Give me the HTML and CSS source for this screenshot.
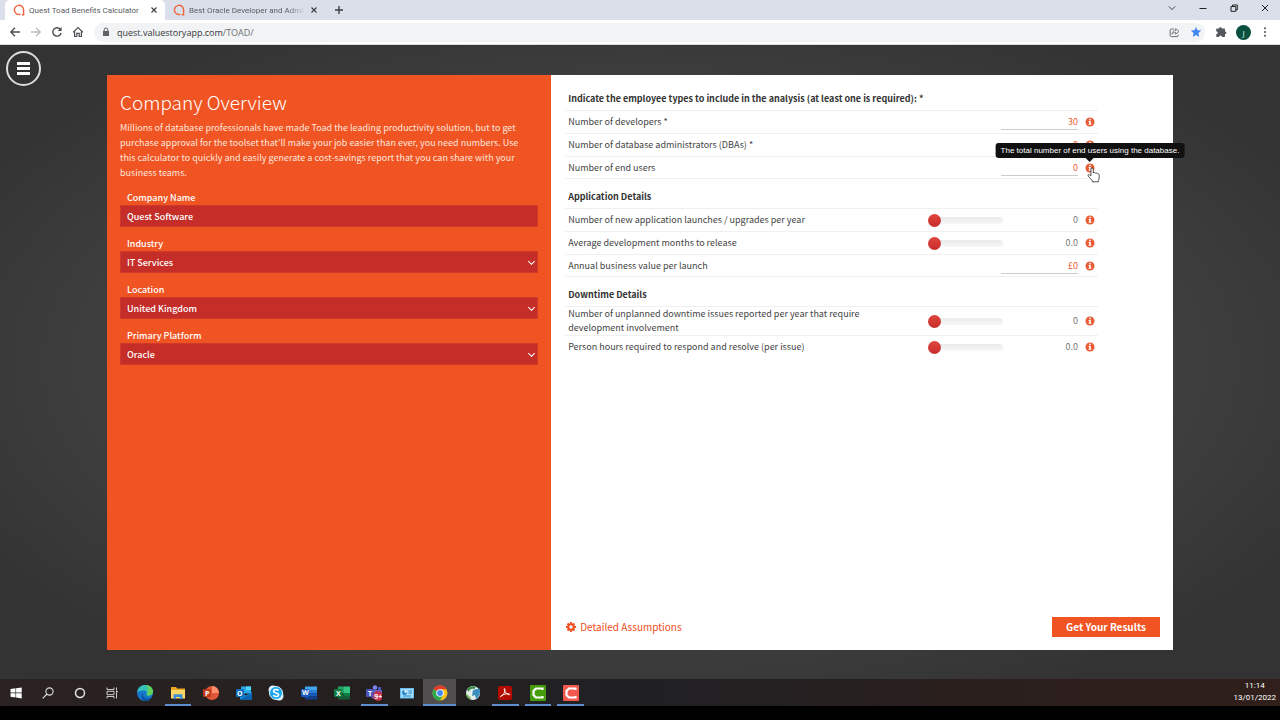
FILE: index.html
```
<!DOCTYPE html>
<html lang="en">
<head>
    <meta charset="UTF-8">
    <meta name="viewport" content="width=device-width, initial-scale=1.0">
    <title>Quest Toad Benefits Calculator</title>
    <link rel="stylesheet" href="styles.css">
</head>
<body>

    <!-- Shared icons -->
    <svg class="sprite" aria-hidden="true">
        <symbol id="quest" viewBox="0 0 12 12">
            <path d="M7.400 10.300A4.600 4.600 0 1 1 10.600 6v4.800H8.800" fill="none" stroke="#f0643f" stroke-width="1.400"/>
        </symbol>
        <symbol id="close" viewBox="0 0 8 8">
            <path d="M1.5 1.5l5 5M6.5 1.5l-5 5" stroke="#3c4043" stroke-width="1.2"/>
        </symbol>
        <symbol id="info" viewBox="0 0 10 10">
            <circle cx="5" cy="5" r="4.5" fill="#ea5c36"/>
            <path d="M4.2 1.8h1.6v1.4H4.2zM3.6 4h2.2v2.8h.6v1H3.6v-1h.6V5h-.6z" fill="#fff"/>
        </symbol>
    </svg>

    <!-- Browser tabs -->
    <div class="tab-strip">
        <div class="tab active">
            <svg class="favicon"><use href="#quest"/></svg>
            <span class="tab-title">Quest Toad Benefits Calculator</span>
            <button class="icon-btn" aria-label="Close tab"><svg width="8" height="8"><use href="#close"/></svg></button>
        </div>
        <div class="tab">
            <svg class="favicon"><use href="#quest"/></svg>
            <span class="tab-title fade">Best Oracle Developer and Admi</span>
            <button class="icon-btn" aria-label="Close tab"><svg width="8" height="8"><use href="#close"/></svg></button>
        </div>
        <button class="icon-btn new-tab" aria-label="New tab"><svg width="10" height="10" viewBox="0 0 10 10"><path d="M5 1v8M1 5h8" stroke="#3c4043" stroke-width="1.4"/></svg></button>
        <div class="window-buttons">
            <button class="icon-btn" aria-label="Search tabs"><svg width="10" height="10" viewBox="0 0 10 10"><path d="M1.8 3.4L5 6.6l3.2-3.2" fill="none" stroke="#444" stroke-width="1"/></svg></button>
            <button class="icon-btn" aria-label="Minimise"><svg width="10" height="10" viewBox="0 0 10 10"><path d="M1.5 5.5h7" stroke="#222" stroke-width="1"/></svg></button>
            <button class="icon-btn" aria-label="Restore"><svg width="10" height="10" viewBox="0 0 10 10"><path d="M2 3.5h4.8v4.8H2zM3.5 3.3V2h4.8v4.8H7" fill="none" stroke="#222" stroke-width="1"/></svg></button>
            <button class="icon-btn" aria-label="Close window"><svg width="10" height="10" viewBox="0 0 10 10"><path d="M2 2l6 6M8 2L2 8" stroke="#222" stroke-width="1"/></svg></button>
        </div>
    </div>

    <!-- Browser toolbar -->
    <div class="toolbar">
        <button class="icon-btn" aria-label="Back"><svg width="12" height="12" viewBox="0 0 12 12"><path d="M11 6H2M6 1.8L1.8 6 6 10.2" fill="none" stroke="#4a4d51" stroke-width="1.3"/></svg></button>
        <button class="icon-btn" aria-label="Forward"><svg width="12" height="12" viewBox="0 0 12 12"><path d="M1 6h9M6 1.8L10.2 6 6 10.2" fill="none" stroke="#b8babd" stroke-width="1.3"/></svg></button>
        <button class="icon-btn" aria-label="Reload"><svg width="12" height="12" viewBox="0 0 12 12"><path d="M9.6 3.7A4.2 4.2 0 1 0 10.1 7" fill="none" stroke="#4a4d51" stroke-width="1.4"/><path d="M10.6 1v4H6.6z" fill="#4a4d51"/></svg></button>
        <button class="icon-btn" aria-label="Home"><svg width="12" height="12" viewBox="0 0 12 12"><path d="M1 6.4L6 1.6l5 4.8M2.6 5.4v5.1h2.2V7.4h2.4v3.1h2.2V5.4" fill="none" stroke="#4a4d51" stroke-width="1.2"/></svg></button>
        <div class="address">
            <svg width="8" height="10" viewBox="0 0 8 10"><path d="M1 4h6v5H1z" fill="#5f6368"/><path d="M2.2 4V2.8a1.8 1.8 0 0 1 3.6 0V4" fill="none" stroke="#5f6368" stroke-width="1"/></svg>
            <span class="url">quest.valuestoryapp.com<span class="path">/TOAD/</span></span>
            <button class="icon-btn" aria-label="Share"><svg width="11" height="11" viewBox="0 0 11 11"><path d="M5 2H2.4A1.2 1.2 0 0 0 1.200 3.200v5.200A1.2 1.2 0 0 0 2.4 9.600h5.600A1.2 1.2 0 0 0 9.200 8.400V7.500" fill="none" stroke="#6a6d70"/><path d="M3 7.200C3.200 4.800 4.500 3.600 6.600 3.500V1.600L10 4.400 6.600 7.200V5.400C5 5.400 4 6 3 7.200z" fill="none" stroke="#6a6d70" stroke-width=".9"/></svg></button>
            <button class="icon-btn" aria-label="Bookmark"><svg width="12" height="12" viewBox="0 0 12 12"><path d="M6 .9l1.500 3.400 3.700.3-2.800 2.500.8 3.700L6 8.900l-3.200 1.900.8-3.700L.8 4.600l3.700-.3z" fill="#4285f4"/></svg></button>
        </div>
        <button class="icon-btn" aria-label="Extensions"><svg width="12" height="12" viewBox="0 0 12 12"><path d="M4 2.600a1.400 1.400 0 0 1 2.800 0h2.400a.8.8 0 0 1 .8.800v2a1.400 1.400 0 0 1 0 2.800v2a.8.8 0 0 1-.8.800H7a1.500 1.500 0 0 0-3 0H2a.8.8 0 0 1-.8-.8V8.200a1.500 1.500 0 0 0 0-3V3.400a.8.8 0 0 1 .8-.8z" fill="#55585c"/></svg></button>
        <button class="avatar" aria-label="Profile">J</button>
        <button class="icon-btn" aria-label="Menu"><svg width="10" height="12" viewBox="0 0 10 12"><g fill="#4a4d51"><circle cx="5" cy="2.200" r="1"/><circle cx="5" cy="6" r="1"/><circle cx="5" cy="9.800" r="1"/></g></svg></button>
    </div>

    <!-- Page -->
    <main class="stage">
        <button class="menu-btn" aria-label="Open menu"><span></span><span></span><span></span></button>

        <form class="calculator">
            <section class="overview">
                <h1>Company Overview</h1>
                <p>Millions of database professionals have made Toad the leading productivity solution, but to get purchase approval for the toolset that'll make your job easier than ever, you need numbers. Use this calculator to quickly and easily generate a cost-savings report that you can share with your business teams.</p>

                <label for="company">Company Name</label>
                <input class="field" type="text" id="company" value="Quest Software">

                <label for="industry">Industry</label>
                <div class="select-wrap">
                    <select class="field" id="industry"><option>IT Services</option></select>
                </div>

                <label for="location">Location</label>
                <div class="select-wrap">
                    <select class="field" id="location"><option>United Kingdom</option></select>
                </div>

                <label for="platform">Primary Platform</label>
                <div class="select-wrap">
                    <select class="field" id="platform"><option>Oracle</option></select>
                </div>
            </section>

            <section class="details">
                <div class="group">
                    <h2>Indicate the employee types to include in the analysis (at least one is required): *</h2>
                    <div class="row">
                        <label for="developers">Number of developers *</label>
                        <input class="amount" type="text" id="developers" value="30">
                        <button type="button" class="info" aria-label="Info"><svg><use href="#info"/></svg></button>
                    </div>
                    <div class="row">
                        <label for="dbas">Number of database administrators (DBAs) *</label>
                        <input class="amount" type="text" id="dbas" value="0">
                        <button type="button" class="info" aria-label="Info"><svg><use href="#info"/></svg></button>
                    </div>
                    <div class="row">
                        <label for="users">Number of end users</label>
                        <input class="amount" type="text" id="users" value="0">
                        <button type="button" class="info" aria-label="Info">
                            <svg><use href="#info"/></svg>
                            <span class="tooltip" role="tooltip">The total number of end users using the database.</span>
                            <svg class="pointer" viewBox="0 0 12 15"><path d="M3.600 8.200V2a1.100 1.100 0 0 1 2.200 0v3.600c.3-.7 1.800-.6 2 .3.500-.5 1.600-.3 1.800.5.600-.4 1.700 0 1.700 1v3c0 1-.6 1.800-.8 2.500v1H4.900v-1C4 11.900 2.400 10 1 8.400c-.5-.8.500-1.700 1.300-1.100z" fill="#fff" stroke="#333" stroke-width=".8"/></svg>
                        </button>
                    </div>
                </div>

                <div class="group">
                    <h2>Application Details</h2>
                    <div class="row">
                        <label for="launches">Number of new application launches / upgrades per year</label>
                        <input type="range" id="launches" min="0" max="50" value="0">
                        <output for="launches">0</output>
                        <button type="button" class="info" aria-label="Info"><svg><use href="#info"/></svg></button>
                    </div>
                    <div class="row">
                        <label for="months">Average development months to release</label>
                        <input type="range" id="months" min="0" max="24" value="0">
                        <output for="months">0.0</output>
                        <button type="button" class="info" aria-label="Info"><svg><use href="#info"/></svg></button>
                    </div>
                    <div class="row">
                        <label for="launch-value">Annual business value per launch</label>
                        <input class="amount" type="text" id="launch-value" value="£0">
                        <button type="button" class="info" aria-label="Info"><svg><use href="#info"/></svg></button>
                    </div>
                </div>

                <div class="group">
                    <h2>Downtime Details</h2>
                    <div class="row">
                        <label for="issues">Number of unplanned downtime issues reported per year that require development involvement</label>
                        <input type="range" id="issues" min="0" max="50" value="0">
                        <output for="issues">0</output>
                        <button type="button" class="info" aria-label="Info"><svg><use href="#info"/></svg></button>
                    </div>
                    <div class="row">
                        <label for="hours">Person hours required to respond and resolve (per issue)</label>
                        <input type="range" id="hours" min="0" max="50" value="0">
                        <output for="hours">0.0</output>
                        <button type="button" class="info" aria-label="Info"><svg><use href="#info"/></svg></button>
                    </div>
                </div>

                <div class="actions">
                    <a href="#">
                        <svg width="10" height="10" viewBox="0 0 10 10"><path d="M5 0v10M0 5h10M1.500 1.500l7 7M8.500 1.500l-7 7" stroke="#f04e23" stroke-width="1.900"/><circle cx="5" cy="5" r="2.700" fill="#fff" stroke="#f04e23" stroke-width="2"/></svg>
                        Detailed Assumptions
                    </a>
                    <button type="button" class="results">Get Your Results</button>
                </div>
            </section>
        </form>
    </main>

    <!-- Taskbar -->
    <footer class="taskbar">
        <div class="system">
            <button class="task" aria-label="Start"><svg viewBox="0 0 16 16"><path d="M2.500 4l5-.7v4.300h-5zM8.100 3.200l5.600-.8v5.200H8.100zM2.500 8.200h5v4.300l-5-.7zM8.100 8.200h5.600v5.200l-5.600-.8z" fill="#fff"/></svg></button>
            <button class="task" aria-label="Search"><svg viewBox="0 0 16 16"><circle cx="9.500" cy="6.500" r="3.600" fill="none" stroke="#ddd" stroke-width="1.100"/><path d="M7 9l-4.300 4.300" stroke="#ddd" stroke-width="1.200"/></svg></button>
            <button class="task" aria-label="Cortana"><svg viewBox="0 0 16 16"><circle cx="8" cy="8" r="4.500" fill="none" stroke="#e4e4e4" stroke-width="1.500"/></svg></button>
            <button class="task" aria-label="Task view"><svg viewBox="0 0 16 16"><path d="M3 2.500v2h7v-2M3 6.300h7v3.400H3zM3 13.500v-2h7v2M12.500 2.500v3M12.500 8v5.500" fill="none" stroke="#ccc"/><path d="M12 6h1.500v1.500H12z" fill="#fff"/></svg></button>
        </div>
        <div class="apps">
            <button class="task" aria-label="Edge"><svg viewBox="0 0 16 16"><circle cx="8" cy="8" r="8" fill="#1477c9"/><path d="M.2 7C1 2.600 4.500 0 8.300 0 13 0 16 3.200 16 6.600c0 2.600-2 4-4.200 4-1.500 0-2.500-.6-2.200-1.300.6-1.500-.2-3.700-3-3.700C3.800 5.600 1.400 6.300.2 7z" fill="#35c1b8"/><path d="M9 .1c4.200.4 7 3.200 7 6.500 0 2.600-2 4-4.200 4-1.500 0-2.500-.6-2.200-1.300C11.500 7 11.500 3 9 .1z" fill="#62d05b"/><path d="M5.600 8.200c-.5 3.400 2.400 6.300 6.200 5.500 1-.2 1.900-.6 2.600-1-1.200 2.200-3.900 3.500-6.600 3.300-3.300-.5-4.200-5.800-2.200-7.800z" fill="#0d4f9f"/></svg></button>
            <button class="task open" aria-label="File Explorer"><svg viewBox="0 0 16 16"><path d="M1 2h5l1.200 1.400H15V13H1z" fill="#e9a825"/><path d="M1 5h14v8.500H1z" fill="#ffd867"/><path d="M3.500 14V9.300h9V14h-2.600v-2H6v2z" fill="#3b8fd4"/></svg></button>
            <button class="task" aria-label="PowerPoint"><svg viewBox="0 0 16 16"><circle cx="9" cy="8" r="7" fill="#e0563b"/><path d="M9 1a7 7 0 0 1 7 7H9z" fill="#ff8f6b"/><rect y="4" width="8" height="8" rx="1" fill="#c13b1b"/><text x="2" y="10.500" class="letter">P</text></svg></button>
            <button class="task" aria-label="Outlook"><svg viewBox="0 0 16 16"><path d="M5 1.500h10v7H5z" fill="#28a8ea"/><path d="M10 1.500h5V5h-5z" fill="#50d9ff"/><path d="M4 7l6 3.500L16 7v7.500H4z" fill="#1490df"/><path d="M4 14.500L16 8v6.500z" fill="#0a64b4"/><rect y="4" width="8" height="8" rx="1" fill="#0f6cbd"/><text x="1" y="10.500" class="letter">O</text></svg></button>
            <button class="task" aria-label="Skype"><svg viewBox="0 0 16 16"><circle cx="5" cy="5" r="4.500" fill="#dff3ff"/><circle cx="11" cy="11" r="4.500" fill="#dff3ff"/><circle cx="8" cy="8" r="6.500" fill="#1ba8ea" stroke="#dff3ff"/><path d="M10.600 5.500C9.500 4 5.600 4 5.600 6.200c0 2.300 5 1.300 5 3.600 0 2.200-4.200 2.200-5.200.4" fill="none" stroke="#fff" stroke-width="1.600"/></svg></button>
            <button class="task" aria-label="Word"><svg viewBox="0 0 16 16"><path d="M4 1.500h12V5H4z" fill="#41a5ee"/><path d="M4 5h12v3.200H4z" fill="#2b7cd3"/><path d="M4 8.200h12v3.200H4z" fill="#185abd"/><path d="M4 11.400h12v3.100H4z" fill="#103f91"/><rect y="4" width="8" height="8" rx="1" fill="#185abd"/><text x="1" y="10.200" class="letter">W</text></svg></button>
            <button class="task" aria-label="Excel"><svg viewBox="0 0 16 16"><path d="M4 1.500h6V8H4z" fill="#21a366"/><path d="M10 1.500h6V8h-6z" fill="#33c481"/><path d="M4 8h12v6.500H4z" fill="#185c37"/><path d="M10 8h6v3.200h-6z" fill="#107c41"/><rect y="4" width="8" height="8" rx="1" fill="#107c41"/><text x="2" y="10.500" class="letter">X</text></svg></button>
            <button class="task open" aria-label="Teams"><svg viewBox="0 0 16 16"><circle cx="9" cy="2.500" r="2.300" fill="#7b83eb"/><circle cx="13.500" cy="3.500" r="1.700" fill="#5059c9"/><path d="M5 5h11v5a4 4 0 0 1-4 4H8a4 4 0 0 1-3-3z" fill="#5b62c9"/><rect y="4" width="8" height="8" rx="1" fill="#4b53bc"/><text x="2" y="10.500" class="letter">T</text><circle cx="12" cy="11" r="5" fill="#c4314b"/><text x="8.200" y="13.500" class="letter">9+</text></svg></button>
            <button class="task" aria-label="Control Panel"><svg viewBox="0 0 16 16"><path d="M1 3h14v10.500H1z" fill="#63bdf0"/><path d="M2 4h12v8.500H2z" fill="#a8defa"/><circle cx="5.500" cy="7.500" r="2.500" fill="#2785c9"/><path d="M5.500 7.500V5A2.500 2.500 0 0 1 8 7.500z" fill="#fff"/><path d="M9.500 6h3.500M9.500 8h3.500M4 11h8" stroke="#2785c9"/></svg></button>
            <button class="task open current" aria-label="Chrome"><svg viewBox="0 0 16 16"><circle cx="8" cy="8" r="7.500" fill="#fbc116"/><path d="M8 8L1.500 4.250A7.500 7.500 0 0 1 14.500 4.250H8z" fill="#e33b2e"/><path d="M1.500 4.250A7.500 7.500 0 0 0 8 15.500L11.200 9.800 8 8z" fill="#2da94f"/><circle cx="8" cy="8" r="3.800" fill="#fff"/><circle cx="8" cy="8" r="2.900" fill="#4285f4"/></svg></button>
            <button class="task" aria-label="Remote tool"><svg viewBox="0 0 16 16"><circle cx="8" cy="8" r="7" fill="#e4efe9"/><path d="M2 4.500C4 1 8 .5 11 1.800L9.500 4C7 3 4.500 4 3.500 7z" fill="#3d8b4b"/><path d="M8 5l6.500-1.500C16 8 14 12 11 14l-1-4-3 1z" fill="#3b8fc0"/><path d="M2 9l4 4-1 1.500C3 13.500 1.500 11.500 1 9z" fill="#79b35c"/></svg></button>
            <button class="task open" aria-label="Acrobat"><svg viewBox="0 0 16 16"><rect x="1" y="1" width="14" height="14" rx="2" fill="#b30b00"/><path d="M3.500 11.500C6 10.500 8.500 7 8 4.200c-.2-1-1.200-.6-.8.6.7 2.300 2.500 4.500 4.700 5 1.200.1 1.100-1-.2-1.100-2.300-.1-5 .6-7.400 2.200-.7.500-1.100.900-.8.600z" fill="none" stroke="#fff" stroke-width=".9"/></svg></button>
            <button class="task open" aria-label="Camtasia"><svg viewBox="0 0 16 16"><rect width="16" height="16" rx="1" fill="#459b0b"/><path d="M12.500 5V3.500H6L3.500 6v4L6 12.500h6.500V11" fill="none" stroke="#fff" stroke-width="2.200"/></svg></button>
            <button class="task open" aria-label="Camtasia Recorder"><svg viewBox="0 0 16 16"><rect width="16" height="16" rx="1" fill="#f4594e"/><path d="M12.500 5V3.500H6L3.500 6v4L6 12.500h6.500V11" fill="none" stroke="#fff" stroke-width="2.200"/></svg></button>
        </div>
        <div class="clock"><span>11:14</span><span>13/01/2022</span></div>
    </footer>

</body>
</html>
```
FILE: styles.css
```
/* General Styles */
* {
    margin: 0;
    padding: 0;
    box-sizing: border-box;
}
body {
    display: flex;
    flex-direction: column;
    min-height: 100vh;
    padding-bottom: 14px;
    background: #000;
    font-family: "Noto Sans CJK SC", sans-serif;
    font-size: 9px;
    line-height: 15px;
    color: #444;
}
button, input, select {
    font: inherit;
    color: inherit;
    border: none;
    background: none;
}
svg {
    display: block;
    flex: none;
}
.sprite {
    position: absolute;
    width: 0;
    height: 0;
}
.icon-btn {
    display: flex;
    align-items: center;
    justify-content: center;
    flex: none;
}

/* Browser */
.tab-strip, .toolbar {
    display: flex;
    align-items: center;
}
.tab-strip {
    height: 20px;
    padding-left: 5px;
    background: #dbdfe9;
    font-family: Roboto, sans-serif;
}
.tab {
    display: flex;
    align-items: center;
    width: 160px;
    height: 20px;
    padding: 0 7px 0 8px;
    font-size: 8px;
    color: #5a5d61;
}
.tab.active {
    background: #fff;
    border-radius: 5px 5px 0 0;
}
.favicon {
    width: 12px;
    height: 12px;
}
.tab-title {
    flex: 1;
    margin: 0 4px;
    white-space: nowrap;
}
.tab-title.fade {
    mask-image: linear-gradient(90deg, #000 85%, transparent);
}
.new-tab {
    margin-left: 9px;
}
.window-buttons {
    display: flex;
    gap: 21px;
    margin-left: auto;
    padding: 0 10px 4px 0;
}
.toolbar {
    height: 25px;
    padding: 0 10px 0 9px;
    gap: 9px;
    background: #fff;
    border-bottom: 1px solid #dadce0;
    font-family: "Open Sans", sans-serif;
}
.address {
    display: flex;
    flex: 1;
    align-items: center;
    gap: 10px;
    height: 19px;
    margin: 0 1px;
    padding: 0 3px 0 8px;
    border-radius: 10px;
    background: #f1f3f4;
    color: #35383c;
}
.url {
    flex: 1;
    margin-left: -3px;
}
.path {
    color: #6b6f73;
}
.avatar {
    width: 15px;
    height: 15px;
    border-radius: 50%;
    background: #0b4f3f;
    color: #dfe;
    font-size: 8px;
}

/* Page */
.stage {
    position: relative;
    display: flex;
    flex: 1;
    padding: 30px 107px 29px;
    background: radial-gradient(ellipse at center, #4e4e50 0%, #434345 50%, #333 85%);
}
.menu-btn {
    position: absolute;
    top: 6px;
    left: 6px;
    display: flex;
    flex-direction: column;
    align-items: center;
    justify-content: center;
    gap: 2px;
    width: 35px;
    height: 35px;
    border: 2px solid #ddd;
    border-radius: 50%;
}
.menu-btn span {
    width: 13px;
    height: 3px;
    background: #fff;
}
.calculator {
    display: grid;
    grid-template-columns: 5fr 7fr;
    flex: 1;
}

/* Company overview */
.overview {
    padding: 14px 13px;
    background: #f05423;
    color: #fff;
}
.overview h1 {
    font-size: 19px;
    line-height: 26px;
    font-weight: 300;
    margin-bottom: 5px;
}
.overview p {
    margin-bottom: 10px;
    padding-right: 10px;
    color: #ffe6dc;
}
.overview label {
    display: block;
    padding-left: 7px;
    font-weight: 500;
}
.field {
    display: block;
    width: 100%;
    height: 22px;
    margin-bottom: 9px;
    padding: 0 6px;
    background: #c52d28;
    border: 1px solid #d0382a;
    font-weight: 500;
    appearance: none;
}
.select-wrap {
    position: relative;
}
.select-wrap::after {
    content: "";
    position: absolute;
    top: 8px;
    right: 4px;
    width: 4px;
    height: 4px;
    border-right: 1px solid #fff;
    border-bottom: 1px solid #fff;
    transform: rotate(45deg);
}

/* Calculator inputs */
.details {
    display: flex;
    flex-direction: column;
    padding: 12px 13px 13px 14px;
    background: #fff;
}
.group {
    margin: 0 62px 6px 0;
}
.group h2 {
    padding-left: 3px;
    font-size: 9px;
    line-height: 23px;
    font-weight: 700;
    color: #333;
}
.row {
    display: grid;
    grid-template-columns: 1fr 75px 75px 20px;
    align-items: center;
    min-height: 23px;
    padding-left: 3px;
    border-top: 1px solid #f0f0f0;
    line-height: 14px;
}
.group:not(:nth-of-type(3)) .row:last-child {
    border-bottom: 1px solid #f0f0f0;
}
.row label {
    padding-right: 50px;
}
.amount {
    grid-column: 3;
    width: 77px;
    height: 16px;
    margin-left: -2px;
    border-bottom: 1px solid #ccc;
    text-align: right;
    color: #ea5c36;
}
.row output {
    text-align: right;
    color: #777;
}
.info {
    position: relative;
    grid-column: 4;
    width: 10px;
    height: 10px;
    margin-left: 7px;
}
.info svg {
    width: 10px;
    height: 10px;
}
.tooltip {
    position: absolute;
    bottom: 15px;
    left: 50%;
    z-index: 1;
    transform: translateX(-50%);
    padding: 0 5px;
    border-radius: 3px;
    background: #111;
    color: #fff;
    font: 8px/15px "Liberation Sans", sans-serif;
    white-space: nowrap;
}
.tooltip::after {
    content: "";
    position: absolute;
    top: 100%;
    left: 50%;
    margin-left: -4px;
    border: 4px solid transparent;
    border-top-color: #111;
    border-bottom: none;
}
.info .pointer {
    position: absolute;
    top: 4px;
    left: 2px;
    width: 13px;
    height: 16px;
}
input[type="range"] {
    width: 75px;
    height: 14px;
    appearance: none;
}
input[type="range"]::-webkit-slider-runnable-track {
    height: 7px;
    border-radius: 4px;
    background: linear-gradient(#ebebeb, #f7f7f7);
}
input[type="range"]::-webkit-slider-thumb {
    appearance: none;
    width: 13px;
    height: 13px;
    margin-top: -3px;
    border-radius: 50%;
    background: linear-gradient(#e0443e, #c62f2b);
}

/* Bottom actions */
.actions {
    display: flex;
    align-items: center;
    justify-content: space-between;
    margin-top: auto;
    font-size: 10px;
}
.actions a {
    display: flex;
    align-items: center;
    gap: 4px;
    padding: 0 0 1px 1px;
    color: #f04e23;
    text-decoration: none;
}
.results {
    width: 108px;
    height: 20px;
    padding-bottom: 1px;
    background: #f05423;
    color: #fff;
    font-weight: 700;
}

/* Taskbar */
.taskbar {
    display: flex;
    height: 27px;
    background: linear-gradient(90deg, #2b2222, #24201f 30%, #202024 50%, #2a1f1d 75%, #301f1b);
    font-family: Roboto, sans-serif;
    color: #fff;
}
.system, .apps {
    display: flex;
}
.system {
    width: 129px;
}
.apps {
    width: 458px;
}
.system .task {
    width: 32px;
}
.apps .task {
    flex: 1;
}
.task {
    position: relative;
    display: flex;
    align-items: center;
    justify-content: center;
}
.task svg {
    width: 16px;
    height: 16px;
}
.task.open::after {
    content: "";
    position: absolute;
    bottom: 0;
    left: 3px;
    right: 3px;
    height: 2px;
    background: #5f8dce;
}
.task.current {
    background: #514e4f;
}
.task.current::after {
    left: 0;
    right: 0;
}
.letter {
    font: bold 7px "Open Sans", sans-serif;
    fill: #fff;
}
.clock {
    display: flex;
    flex-direction: column;
    align-items: center;
    margin-left: auto;
    padding: 1px 4px 0 0;
    font-size: 8px;
    line-height: 12px;
}
```
